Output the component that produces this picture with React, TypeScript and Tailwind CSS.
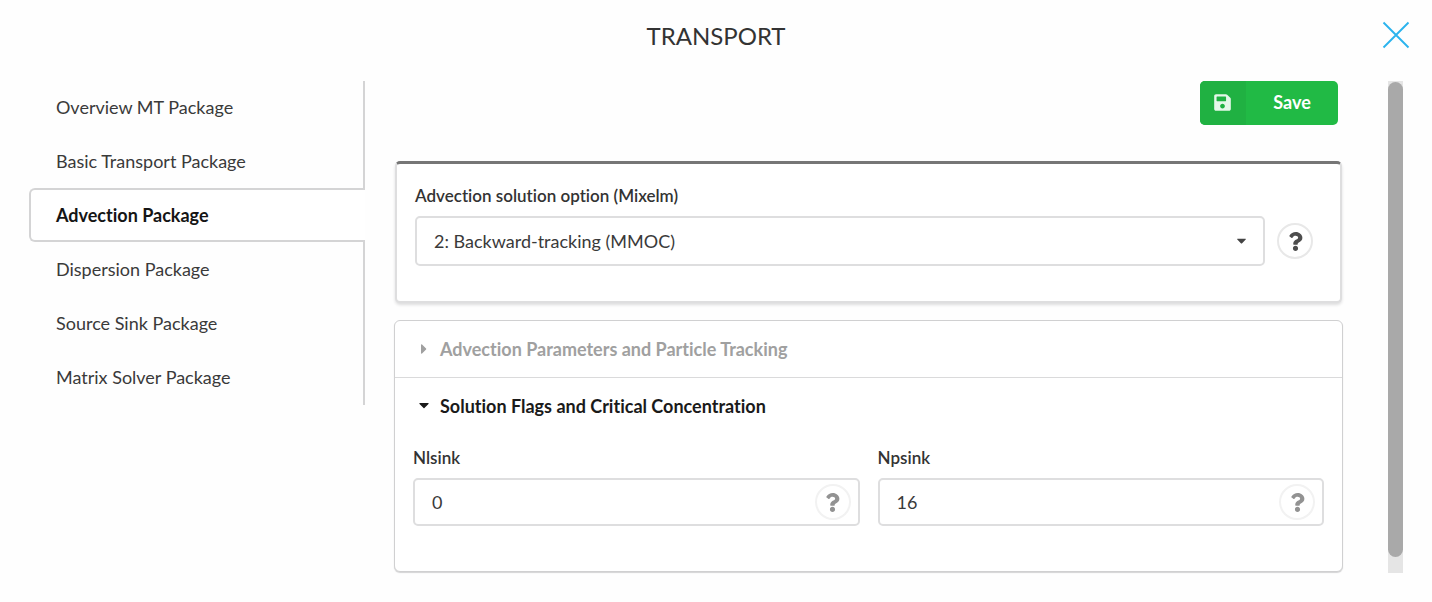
import { useState } from "react";
import { FaCaretDown, FaCaretRight, FaQuestion, FaSave } from "react-icons/fa";

const packages = [
  "Overview MT Package",
  "Basic Transport Package",
  "Advection Package",
  "Dispersion Package",
  "Source Sink Package",
  "Matrix Solver Package",
];

const mixelmOptions = [
  "0: Standard finite-difference method",
  "1: Forward-tracking (MOC)",
  "2: Backward-tracking (MMOC)",
  "3: Hybrid (HMOC)",
];

const flags = [
  { id: "nlsink", label: "Nlsink", value: "0" },
  { id: "npsink", label: "Npsink", value: "16" },
];

const HelpButton = ({ muted = false }: { muted?: boolean }) => (
  <button
    type="button"
    aria-label="Help"
    className={
      muted
        ? "flex size-9 shrink-0 items-center justify-center rounded-full border-2 border-[#f2f2f2] text-[#929292]"
        : "flex size-9 shrink-0 items-center justify-center rounded-full border-2 border-[#e8e8e8] text-[#4d4d4d]"
    }
  >
    <FaQuestion size={19} />
  </button>
);

const PackageMenu = () => {
  const [active, setActive] = useState("Advection Package");

  return (
    <nav className="w-[336px] shrink-0">
      {packages.map((name) => (
        <button
          key={name}
          type="button"
          onClick={() => setActive(name)}
          className={
            name === active
              ? "block h-[54px] w-full rounded-l-md border-2 border-r-0 border-[#d4d4d5] bg-white pl-[25px] text-left font-bold text-[#151515]"
              : "block h-[54px] w-full border-r-2 border-[#d4d4d5] pl-[27px] text-left text-[#3a3a3a] first:h-[53px] last:h-[55px]"
          }
        >
          {name}
        </button>
      ))}
    </nav>
  );
};

const SaveButton = () => (
  <button
    type="button"
    className="flex h-11 w-[138px] items-stretch overflow-hidden rounded-[5px] bg-[#21ba45] font-bold text-white"
  >
    <span className="flex w-[46px] items-center justify-center bg-[#20b142] pr-0.5 pb-0.5 text-[#e5f7e9]">
      <FaSave size={19} />
    </span>
    <span className="flex flex-1 items-center justify-center pb-0.5">Save</span>
  </button>
);

const MixelmSegment = () => (
  <section className="mx-px mt-9 rounded-[5px] border-2 border-t-[3px] border-[#dededf] border-t-[#767676] bg-white px-[18px] pt-5 pb-[35px] shadow-[0_2px_3px_rgba(34,36,38,0.15)]">
    <label htmlFor="mixelm" className="block text-[17px] leading-6 font-semibold text-[#333]">
      Advection solution option (Mixelm)
    </label>
    <div className="mt-2 flex items-center gap-3 pr-[9px]">
      <div className="relative flex-1">
        <select
          id="mixelm"
          defaultValue={mixelmOptions[2]}
          className="h-[50px] w-full appearance-none rounded-[5px] border-2 border-[#dededf] bg-white px-[17px] text-[#3a3a3a]"
        >
          {mixelmOptions.map((option) => (
            <option key={option}>{option}</option>
          ))}
        </select>
        <FaCaretDown
          size={15}
          className="pointer-events-none absolute top-[17px] right-4 text-[#444]"
        />
      </div>
      <HelpButton />
    </div>
  </section>
);

const Accordion = () => (
  <section className="mt-[17px] rounded-md border border-[#d0d0d1] bg-white shadow-[0_1px_1px_#d4d4d5]">
    <button
      type="button"
      aria-expanded="false"
      className="flex h-[57px] w-full items-center gap-2 border-b border-[#dadadb] pl-[21px] font-bold text-[#a0a0a0]"
    >
      <FaCaretRight size={16} />
      Advection Parameters and Particle Tracking
    </button>
    <button
      type="button"
      aria-expanded="true"
      className="flex h-14 w-full items-center gap-2 pl-[21px] font-bold text-[#1a1a1a]"
    >
      <FaCaretDown size={18} className="-mx-px pb-0.5" />
      Solution Flags and Critical Concentration
    </button>
    <div className="grid grid-cols-2 gap-[18px] px-[18px] pt-3 pb-[45px]">
      {flags.map(({ id, label, value }) => (
        <div key={id}>
          <label htmlFor={id} className="block text-[17px] leading-6 font-semibold text-[#333]">
            {label}
          </label>
          <div className="mt-2 flex h-12 items-center rounded-[5px] border-2 border-[#dededf] bg-white pr-[7px]">
            <input
              id={id}
              type="text"
              defaultValue={value}
              className="h-full min-w-0 flex-1 pl-[17px] text-[#3a3a3a] outline-none"
            />
            <HelpButton muted />
          </div>
        </div>
      ))}
    </div>
  </section>
);

const App = () => (
  <main className="min-h-screen bg-[#fefefe] px-[29px] pb-[29px] font-['Lato',sans-serif] text-[18px] [font-variant-ligatures:none]">
    <header className="grid h-[81px] grid-cols-[1fr_auto_1fr] items-start">
      <h1 className="col-start-2 pt-5 text-[24px] leading-8 text-[#333]">TRANSPORT</h1>
      <button type="button" aria-label="Close" className="mt-[21px] -mr-[7px] justify-self-end">
        <svg viewBox="0 0 28 28" className="size-7" aria-hidden="true">
          <path d="M1.500 1.500l25 25M26.500 1.500l-25 25" fill="none" stroke="#2bb3ee" strokeWidth="1.900" />
        </svg>
      </button>
    </header>
    <div className="flex">
      <PackageMenu />
      <div className="ml-[29px] min-w-0 flex-1 pr-[45px] pb-px">
        <div className="flex justify-end pr-[5px]">
          <SaveButton />
        </div>
        <MixelmSegment />
        <Accordion />
      </div>
      <div className="w-[15px] shrink-0 bg-[#e5e5e5] pt-px pb-4">
        <div className="h-full rounded-full bg-[#a9a9a9]" />
      </div>
    </div>
  </main>
);

export default App;
